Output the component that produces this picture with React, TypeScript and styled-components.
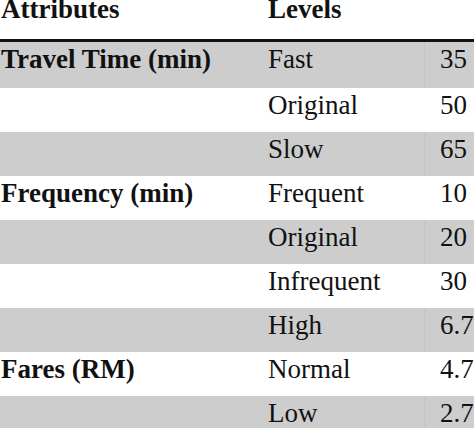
import styled, { createGlobalStyle } from "styled-components";

const GlobalStyle = createGlobalStyle`
  body {
    margin: 0;
    background: #ffffff;
    font-family: "Liberation Serif", "Times New Roman", serif;
    color: #111111;
  }
`;

type Level = { name: string; value: string };
type Attribute = { label: string; levels: Level[] };

const attributes: Attribute[] = [
  {
    label: "Travel Time (min)",
    levels: [
      { name: "Fast", value: "35" },
      { name: "Original", value: "50" },
      { name: "Slow", value: "65" },
    ],
  },
  {
    label: "Frequency (min)",
    levels: [
      { name: "Frequent", value: "10" },
      { name: "Original", value: "20" },
      { name: "Infrequent", value: "30" },
      { name: "High", value: "6.7" },
    ],
  },
  {
    label: "Fares (RM)",
    levels: [
      { name: "Normal", value: "4.7" },
      { name: "Low", value: "2.7" },
    ],
  },
];

export default function App() {
  let rowIndex = 0;

  return (
    <>
      <GlobalStyle />
      <Table>
        <HeaderRow>
          <AttrCell>Attributes</AttrCell>
          <LevelCell>Levels</LevelCell>
          <ValueCell $shaded={false} />
        </HeaderRow>
        {attributes.map((attr) =>
          attr.levels.map((level, i) => {
            const shaded = rowIndex % 2 === 0;
            const first = rowIndex === 0;
            rowIndex++;
            return (
              <Row key={attr.label + level.name} $shaded={shaded} $first={first}>
                <AttrCell>{i === 0 ? attr.label : ""}</AttrCell>
                <LevelCell>{level.name}</LevelCell>
                <ValueCell $shaded={shaded}>{level.value}</ValueCell>
              </Row>
            );
          })
        )}
      </Table>
    </>
  );
}

const Table = styled.div`
  width: 474px;
  margin-top: -8px;
  font-size: 27px;
  line-height: 30px;
`;

const RowBase = styled.div`
  display: grid;
  grid-template-columns: 262px 162px 50px;
`;

const HeaderRow = styled(RowBase)`
  height: 47px;
  border-bottom: 3px solid #111111;
  font-weight: bold;
`;

const Row = styled(RowBase)<{ $shaded: boolean; $first: boolean }>`
  height: ${({ $first }) => ($first ? "46px" : "44px")};
  background: ${({ $shaded }) => ($shaded ? "#cdcdcd" : "#ffffff")};
`;

const AttrCell = styled.div`
  padding: 2px 0 0 1px;
  font-weight: bold;
  white-space: nowrap;
`;

const LevelCell = styled.div`
  padding: 2px 0 0 6px;
  white-space: nowrap;
`;

const ValueCell = styled.div<{ $shaded: boolean }>`
  padding: 2px 0 0 15px;
  white-space: nowrap;
  border-left: 1px solid ${({ $shaded }) => ($shaded ? "#c4c4c4" : "#ffffff")};
`;
